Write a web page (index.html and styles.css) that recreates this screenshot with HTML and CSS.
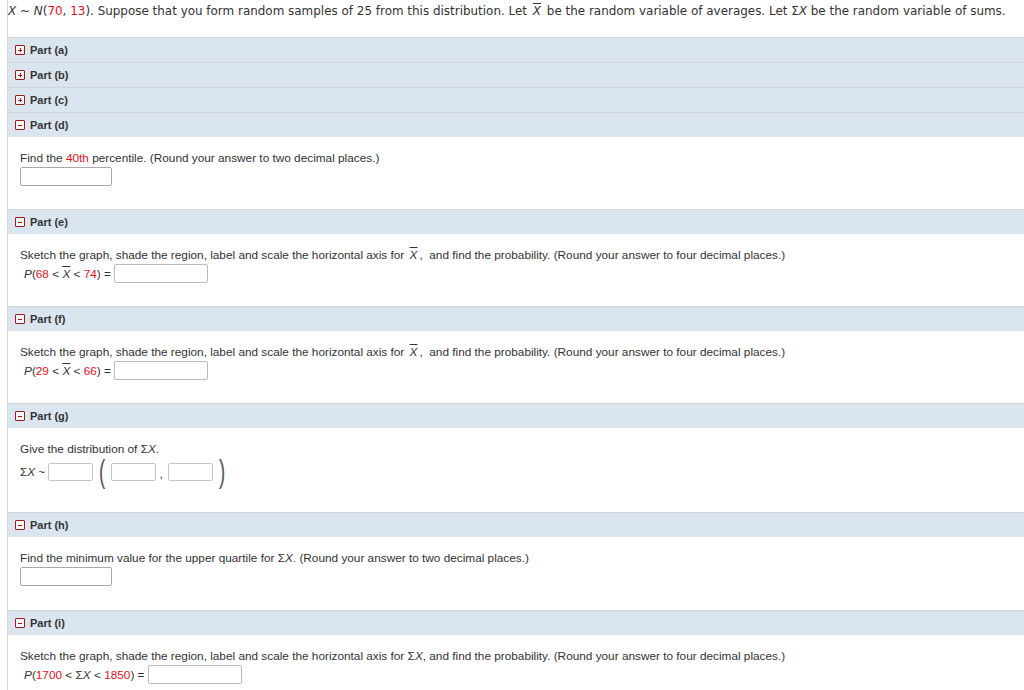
FILE: index.html
```html
<!DOCTYPE html>
<html>
<head>
<meta charset="utf-8">
<link rel="stylesheet" href="styles.css">
</head>
<body>
<div class="page">
  <p class="intro"><i>X</i> ~ <i>N</i>(<span class="red">70</span>, <span class="red">13</span>). Suppose that you form random samples of 25 from this distribution. Let <span class="xbar">X</span> be the random variable of averages. Let Σ<i>X</i> be the random variable of sums.</p>

  <div class="part"><div class="head"><span class="icon plus"></span>Part (a)</div></div>
  <div class="part"><div class="head"><span class="icon plus"></span>Part (b)</div></div>
  <div class="part"><div class="head"><span class="icon plus"></span>Part (c)</div></div>
  <div class="part">
    <div class="head"><span class="icon minus"></span>Part (d)</div>
    <div class="body">
      <div class="line">Find the <span class="red">40th</span> percentile. (Round your answer to two decimal places.)</div>
      <div class="box"></div>
    </div>
  </div>
  <div class="part">
    <div class="head"><span class="icon minus"></span>Part (e)</div>
    <div class="body">
      <div class="line">Sketch the graph, shade the region, label and scale the horizontal axis for <span class="xbar">X</span>,&nbsp; and find the probability. (Round your answer to four decimal places.)</div>
      <div class="prow"><i>P</i>(<span class="red">68</span>&nbsp;&lt;&nbsp;<span class="xbar tight">X</span>&nbsp;&lt;&nbsp;<span class="red">74</span>)&nbsp;=&nbsp;<span class="box inl"></span></div>
    </div>
  </div>
  <div class="part">
    <div class="head"><span class="icon minus"></span>Part (f)</div>
    <div class="body">
      <div class="line">Sketch the graph, shade the region, label and scale the horizontal axis for <span class="xbar">X</span>,&nbsp; and find the probability. (Round your answer to four decimal places.)</div>
      <div class="prow"><i>P</i>(<span class="red">29</span>&nbsp;&lt;&nbsp;<span class="xbar tight">X</span>&nbsp;&lt;&nbsp;<span class="red">66</span>)&nbsp;=&nbsp;<span class="box inl"></span></div>
    </div>
  </div>
  <div class="part">
    <div class="head"><span class="icon minus"></span>Part (g)</div>
    <div class="body">
      <div class="line">Give the distribution of Σ<i>X</i>.</div>
      <div class="dist">Σ<i>X</i> ~ <span class="box sm"></span><span class="paren">(</span><span class="box sm"></span><span class="comma">,</span><span class="box sm"></span><span class="paren">)</span></div>
    </div>
  </div>
  <div class="part">
    <div class="head"><span class="icon minus"></span>Part (h)</div>
    <div class="body tall">
      <div class="line">Find the minimum value for the upper quartile for Σ<i>X</i>. (Round your answer to two decimal places.)</div>
      <div class="box"></div>
    </div>
  </div>
  <div class="part">
    <div class="head"><span class="icon minus"></span>Part (i)</div>
    <div class="body">
      <div class="line">Sketch the graph, shade the region, label and scale the horizontal axis for Σ<i>X</i>, and find the probability. (Round your answer to four decimal places.)</div>
      <div class="prow"><i>P</i>(<span class="red">1700</span>&nbsp;&lt;&nbsp;Σ<i>X</i>&nbsp;&lt;&nbsp;<span class="red">1850</span>)&nbsp;=&nbsp;<span class="box inl"></span></div>
    </div>
  </div>
</div>
</body>
</html>
```
FILE: styles.css
```css
html, body {
  margin: 0;
  padding: 0;
  background: #fff;
}
.page {
  margin-left: 7px;
  border-left: 1px solid #d8d8d8;
  min-height: 690px;
  font-family: "Liberation Sans", Arial, sans-serif;
  font-size: 11.8px;
  color: #333;
}
.intro {
  margin: 0;
  padding: 3px 0 0 0;
  height: 34px;
  font-family: "DejaVu Sans", Verdana, sans-serif;
  font-size: 11.95px;
  line-height: 16px;
  color: #333;
  white-space: nowrap;
}
.red { color: #e8111b; }
.xbar {
  font-style: italic;
  text-decoration: overline;
  padding: 0 2px;
}
.xbar.tight { padding: 0; }
.part .head {
  height: 24px;
  border-top: 1px solid #d3d3d3;
  background: #dae5ef;
  display: flex;
  align-items: center;
  padding-left: 7px;
  font-weight: bold;
  font-size: 11px;
  color: #333;
}
.icon {
  width: 8px;
  height: 8px;
  border: 1px solid #9b1c1c;
  border-radius: 1px;
  background: #f6f6f6;
  margin-right: 5px;
  position: relative;
}
.icon::before {
  content: "";
  position: absolute;
  left: 2px;
  top: 3.5px;
  width: 4px;
  height: 1px;
  background: #b11;
}
.icon.plus::after {
  content: "";
  position: absolute;
  left: 3.5px;
  top: 2px;
  width: 1px;
  height: 4px;
  background: #b11;
}
.body {
  padding: 14px 12px 23px 12px;
}
.body.tall { padding-bottom: 24px; }
.line {
  line-height: 14px;
  margin-bottom: 2px;
}
.box {
  width: 90px;
  height: 17px;
  border: 1px solid #a9a9a9;
  border-radius: 2px;
  background: #fff;
}
.box.inl {
  width: 92px;
  border-color: #bbb;
}
.prow {
  padding-left: 4px;
  height: 19px;
  display: flex;
  align-items: center;
  white-space: nowrap;
}
.dist {
  display: flex;
  align-items: center;
  height: 28px;
  margin-bottom: 3px;
}
.dist i { margin-right: 3px; }
.box.sm {
  width: 43px;
  height: 16px;
  margin-left: 3px;
  border-color: #c4c4c4;
}
.paren {
  font-size: 31px;
  font-weight: 100;
  color: #555;
  line-height: 28px;
  margin: 0 1px 0 4px;
  transform: scaleX(0.6);
}
.comma {
  margin: 4px 2px 0 3px;
}
```
